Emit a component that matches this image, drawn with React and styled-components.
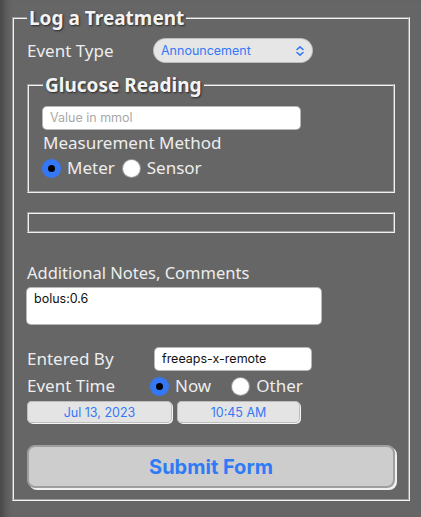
import React from "react";
import styled, { createGlobalStyle } from "styled-components";

const Global = createGlobalStyle`
  html, body { margin: 0; padding: 0; background: #666666; }
  body { font-family: "Noto Sans", "Open Sans", sans-serif; }
  * { box-sizing: border-box; }
`;

const Page = styled.div`
  min-height: 517px;
  padding: 7px 11px 0 12px;
  background: #666666;
  box-shadow: inset 11px 0 9px -7px rgba(0, 0, 0, 0.35);
`;

const Fieldset = styled.fieldset`
  margin: 0;
  border: 2px groove #f2f2f2;
  padding: ${(p) => p.$pad || "0 13px 12px 13px"};
  min-height: ${(p) => p.$minH || "0"};
  width: ${(p) => p.$w || "auto"};
  display: flex;
  flex-direction: column;
`;

const Legend = styled.legend`
  padding: 0 2px;
  font-family: "Noto Sans", sans-serif;
  font-weight: 700;
  font-size: 19px;
  line-height: 22px;
  color: #f4f4f4;
  text-shadow: 1px 1px 2px rgba(0, 0, 0, 0.6);
`;

const Label = styled.span`
  color: #ededed;
  font-size: ${(p) => p.$fs || "16.5px"};
  line-height: 20px;
  width: ${(p) => p.$w || "auto"};
  flex: none;
`;

const Row = styled.div`
  display: flex;
  align-items: center;
  margin-top: ${(p) => p.$mt || "0"};
  gap: ${(p) => p.$gap || "0"};
`;

const Select = styled.div`
  width: 158px;
  height: 23px;
  border-radius: 12px;
  background: #e6e6e6;
  box-shadow: 0 0 0 1px #bdbdbd;
  display: flex;
  align-items: center;
  justify-content: space-between;
  padding: 0 7px 0 7px;
  color: #3478f6;
  font-family: Inter, "Liberation Sans", sans-serif;
  font-size: 12.5px;
`;

const TextInput = styled.div`
  width: ${(p) => p.$w};
  height: ${(p) => p.$h || "22px"};
  background: #ffffff;
  border-radius: 4px;
  box-shadow: 0 0 0 1px #b8b8b8;
  padding: 4px 7px;
  font-family: Inter, "Liberation Sans", sans-serif;
  font-size: 12.5px;
  line-height: 14px;
  color: ${(p) => (p.$placeholder ? "#a9a9a9" : "#111")};
`;

const Radio = styled.span`
  width: 17px;
  height: 17px;
  border-radius: 50%;
  flex: none;
  background: ${(p) => (p.$on ? "#3478f6" : "#ffffff")};
  box-shadow: 0 0 0 1px ${(p) => (p.$on ? "#3478f6" : "#9a9a9a")};
  display: flex;
  align-items: center;
  justify-content: center;
  margin-right: ${(p) => p.$mr || "7px"};
  &::after {
    content: "";
    width: 7px;
    height: 7px;
    border-radius: 50%;
    background: ${(p) => (p.$on ? "#000" : "transparent")};
  }
`;

const RadioText = styled.span`
  color: #ededed;
  font-size: 17px;
  line-height: 20px;
  margin-right: ${(p) => p.$mr || "0"};
`;

const PickButton = styled.div`
  width: ${(p) => p.$w};
  height: 22px;
  border-radius: 5px;
  background: #e4e4e4;
  box-shadow: 1px 1px 0 #f5f5f5, inset 0 0 0 1px #bdbdbd;
  display: flex;
  align-items: center;
  justify-content: center;
  color: #3478f6;
  font-family: Inter, "Liberation Sans", sans-serif;
  font-size: 12.5px;
`;

const Submit = styled.button`
  margin-top: 22px;
  width: 368px;
  height: 43px;
  border-radius: 8px;
  border: 2px solid #9f9f9f;
  background: #cdcdcd;
  box-shadow: 2px 2px 0 #f0f0f0;
  color: #2f7bf5;
  font-family: Inter, "Liberation Sans", sans-serif;
  font-weight: 700;
  font-size: 20px;
  padding: 0;
`;

const Chevrons = () => (
  <svg width="10" height="12" viewBox="0 0 10 12" fill="none" stroke="#3478f6" strokeWidth="1.6" strokeLinecap="round" strokeLinejoin="round">
    <path d="M2 4.5 L5 1.8 L8 4.5" />
    <path d="M2 7.5 L5 10.2 L8 7.5" />
  </svg>
);

export default function App() {
  return (
    <>
      <Global />
      <Page>
        <Fieldset $pad="0 13px 11px 13px">
          <Legend>Log a Treatment</Legend>
          <Row $mt="10px">
            <Label $w="127px" $fs="17px">Event Type</Label>
            <Select>
              <span>Announcement</span>
              <Chevrons />
            </Select>
          </Row>

          <Row $mt="12px">
            <Fieldset $w="100%" $pad="0 14px 13px 14px">
              <Legend>Glucose Reading</Legend>
              <Row $mt="11px">
                <TextInput $w="257px" $placeholder>Value in mmol</TextInput>
              </Row>
              <Row $mt="4px">
                <Label $fs="17px">Measurement Method</Label>
              </Row>
              <Row $mt="5px">
                <Radio $on />
                <RadioText $mr="8px">Meter</RadioText>
                <Radio />
                <RadioText>Sensor</RadioText>
              </Row>
            </Fieldset>
          </Row>

          <Row $mt="19px">
            <Fieldset $w="100%" $pad="0" $minH="21px" />
          </Row>

          <Row $mt="30px">
            <Label>Additional Notes, Comments</Label>
          </Row>
          <Row $mt="5px">
            <TextInput $w="294px" $h="36px">bolus:0.6</TextInput>
          </Row>

          <Row $mt="24px">
            <Label $w="128px" $fs="17px">Entered By</Label>
            <TextInput $w="156px">freeaps-x-remote</TextInput>
          </Row>
          <Row $mt="6px">
            <Label $w="124px" $fs="17px">Event Time</Label>
            <Radio $on />
            <RadioText $mr="21px">Now</RadioText>
            <Radio />
            <RadioText>Other</RadioText>
          </Row>
          <Row $mt="5px" $gap="5px">
            <PickButton $w="145px">Jul 13, 2023</PickButton>
            <PickButton $w="123px">10:45 AM</PickButton>
          </Row>
          <Row>
            <Submit>Submit Form</Submit>
          </Row>
        </Fieldset>
      </Page>
    </>
  );
}
